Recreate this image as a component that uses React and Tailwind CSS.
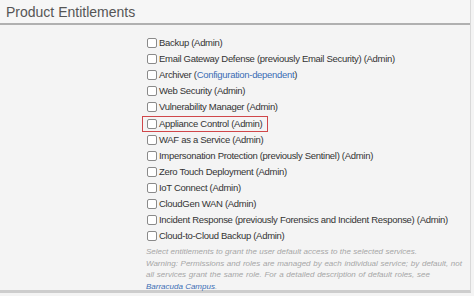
import React from 'react';

const items = [
  { label: 'Backup (Admin)' },
  { label: 'Email Gateway Defense (previously Email Security) (Admin)' },
  { label: 'Archiver', link: 'Configuration-dependent' },
  { label: 'Web Security (Admin)' },
  { label: 'Vulnerability Manager (Admin)' },
  { label: 'Appliance Control (Admin)', highlight: true },
  { label: 'WAF as a Service (Admin)' },
  { label: 'Impersonation Protection (previously Sentinel) (Admin)' },
  { label: 'Zero Touch Deployment (Admin)' },
  { label: 'IoT Connect (Admin)' },
  { label: 'CloudGen WAN (Admin)' },
  { label: 'Incident Response (previously Forensics and Incident Response) (Admin)' },
  { label: 'Cloud-to-Cloud Backup (Admin)' },
];

function Row({ item }) {
  return (
    <div className={item.highlight ? 'h-[17px] flex items-center' : 'h-4 flex items-center'}>
      <div
        className={
          item.highlight
            ? 'flex items-center gap-[2px] h-[16px] -ml-[5px] pl-[4px] pr-[5px] border border-[#d0474a]'
            : 'flex items-center gap-[2px]'
        }
      >
        <span className="w-[10px] h-[10px] rounded-[2px] border border-[#8a8a8a] bg-white" />
        <span className="text-[#333] whitespace-nowrap tracking-[-0.3px]">
          {item.label}
          {item.link && (
            <>
              {' ('}
              <span className="text-[#3a6db4]">{item.link}</span>
              {')'}
            </>
          )}
        </span>
      </div>
    </div>
  );
}

export default function App() {
  return (
    <div
      className="w-[474px] h-[296px] bg-[#f4f4f4] overflow-hidden"
      style={{ fontFamily: '"Liberation Sans", Arial, sans-serif' }}
    >
      <div className="w-[471px] h-[293px] border-r border-b-[3px] border-[#d9d9d9] border-b-[#cdcdcd]">
        <div className="h-[25px] bg-[#f6f6f6] border-b-2 border-[#b0b0b0] pl-[6px] pt-[4px]">
          <h2 className="text-[14px] leading-[16px] text-[#555]">Product Entitlements</h2>
        </div>
        <div className="pl-[147px] pt-[10px] text-[9.5px] leading-[16px]">
          {items.map((it) => (
            <Row key={it.label} item={it} />
          ))}
          <div className="italic text-[8px] leading-[11.5px] text-[#a6a6a6] pt-[2px] -ml-[1px] [text-align-last:justify]">
            <div className="w-[271px]">
              Select entitlements to grant the user default access to the selected services.
            </div>
            <div className="w-[316px]">
              Warning: Permissions and roles are managed by each individual service; by default, not
            </div>
            <div className="w-[284px]">
              all services grant the same role. For a detailed description of default roles, see
            </div>
            <div className="[text-align-last:left]">
              <span className="text-[#3a6db4]">Barracuda Campus</span>.
            </div>
          </div>
        </div>
      </div>
    </div>
  );
}
